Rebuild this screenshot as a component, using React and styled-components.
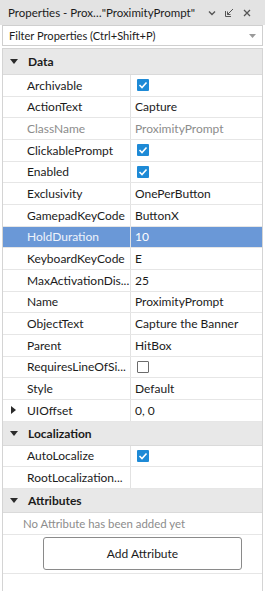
import React from 'react'
import styled, { createGlobalStyle } from 'styled-components'

const Global = createGlobalStyle`
  html, body {
    margin: 0;
    padding: 0;
    background: #ffffff;
  }
  body {
    font-family: Lato, "Open Sans", sans-serif;
    font-size: 12px;
    color: #1b1b1b;
  }
`

const Panel = styled.div`
  width: 265px;
  height: 591px;
  display: flex;
  flex-direction: column;
  background: #ffffff;
  overflow: hidden;
`

const TitleBar = styled.div`
  height: 25px;
  display: flex;
  align-items: center;
  padding: 0 14px 0 8px;
  background: #e3e3e3;
  font-size: 11.5px;
  color: #1b1b1b;
  white-space: nowrap;

  .title {
    flex: 1;
  }
  .icons {
    display: flex;
    align-items: center;
    gap: 9px;
  }
`

const Filter = styled.div`
  height: 19px;
  margin: 0 2px;
  display: flex;
  align-items: center;
  padding: 0 6px;
  border: 1px solid #cfcfcf;
  background: #fff;
  font-size: 11.1px;
  color: #1b1b1b;

  .text {
    flex: 1;
  }
`

const Tree = styled.div`
  flex: 1;
  margin: 2px 2px 0 2px;
  border: 1px solid #d4d4d4;
  border-bottom: none;
  display: flex;
  flex-direction: column;
`

const Section = styled.div`
  height: ${p => p.h || 24}px;
  display: flex;
  align-items: center;
  gap: 10px;
  padding-left: 7px;
  background: #e8e8e8;
  border-bottom: 1px solid #dadada;
  font-weight: 700;
  font-size: 12px;
  color: #1b1b1b;
  box-sizing: border-box;
`

const Row = styled.div`
  height: 21.67px;
  display: grid;
  grid-template-columns: 128px 1fr;
  border-bottom: 1px solid #e6e6e6;
  box-sizing: border-box;
  background: ${p => (p.selected ? '#6a98d7' : '#ffffff')};
  color: ${p => (p.selected ? '#eef3fb' : p.muted ? '#8c8c8c' : '#1b1b1b')};
`

const NameCell = styled.div`
  display: flex;
  align-items: center;
  padding-left: 8px;
  border-right: 1px solid #e2e2e2;
  white-space: nowrap;
  overflow: hidden;
`

const ArrowSlot = styled.span`
  width: 16px;
  flex: none;
  display: flex;
  align-items: center;
`

const ValueCell = styled.div`
  display: flex;
  align-items: center;
  padding-left: 4px;
  white-space: nowrap;
  color: ${p => (p.selected ? '#ffffff' : 'inherit')};
`

const Check = styled.span`
  width: 12px;
  height: 12px;
  margin-left: 2px;
  border-radius: 1px;
  box-sizing: border-box;
  display: inline-flex;
  align-items: center;
  justify-content: center;
  background: ${p => (p.on ? '#1e8ad6' : '#ffffff')};
  border: ${p => (p.on ? 'none' : '1px solid #6b6b6b')};
`

const Note = styled.div`
  height: 22px;
  display: flex;
  align-items: center;
  padding-left: 20px;
  border-bottom: 1px solid #e6e6e6;
  box-sizing: border-box;
  font-size: 11.4px;
  color: #8c8c8c;
`

const ButtonArea = styled.div`
  height: 39px;
  display: flex;
  align-items: flex-start;
  padding: 2px 0 0 40px;
  border-bottom: 1px solid #e6e6e6;
  box-sizing: border-box;
`

const AddButton = styled.button`
  width: 199px;
  height: 33px;
  background: #ffffff;
  border: 1px solid #8a8a8a;
  border-radius: 3px;
  font-family: inherit;
  font-size: 12px;
  color: #1b1b1b;
`

const Down = ({ color = '#2b2b2b' }) => (
  <svg width="8" height="5" viewBox="0 0 8 5">
    <path d="M0 0h8L4 5z" fill={color} />
  </svg>
)

const Right = () => (
  <svg width="5" height="8" viewBox="0 0 5 8">
    <path d="M0 0v8l5-4z" fill="#2b2b2b" />
  </svg>
)

const Tick = () => (
  <svg width="10" height="8" viewBox="0 0 10 8">
    <path d="M1.5 4l2.5 2.5 4.5-5" fill="none" stroke="#fff" strokeWidth="1.6" />
  </svg>
)

const data = [
  { name: 'Archivable', check: true },
  { name: 'ActionText', value: 'Capture' },
  { name: 'ClassName', value: 'ProximityPrompt', muted: true },
  { name: 'ClickablePrompt', check: true },
  { name: 'Enabled', check: true },
  { name: 'Exclusivity', value: 'OnePerButton' },
  { name: 'GamepadKeyCode', value: 'ButtonX' },
  { name: 'HoldDuration', value: '10', selected: true },
  { name: 'KeyboardKeyCode', value: 'E' },
  { name: 'MaxActivationDis...', value: '25' },
  { name: 'Name', value: 'ProximityPrompt' },
  { name: 'ObjectText', value: 'Capture the Banner' },
  { name: 'Parent', value: 'HitBox' },
  { name: 'RequiresLineOfSi...', check: false },
  { name: 'Style', value: 'Default' },
  { name: 'UIOffset', value: '0, 0', expandable: true },
]

const localization = [
  { name: 'AutoLocalize', check: true },
  { name: 'RootLocalization...', value: '' },
]

function PropRow({ item }) {
  return (
    <Row selected={item.selected} muted={item.muted}>
      <NameCell>
        <ArrowSlot>{item.expandable && <Right />}</ArrowSlot>
        {item.name}
      </NameCell>
      <ValueCell selected={item.selected}>
        {item.check !== undefined ? (
          <Check on={item.check}>{item.check && <Tick />}</Check>
        ) : (
          item.value
        )}
      </ValueCell>
    </Row>
  )
}

export default function App() {
  return (
    <>
      <Global />
      <Panel>
        <TitleBar>
          <span className="title">Properties - Prox…"ProximityPrompt"</span>
          <span className="icons">
            <svg width="8" height="6" viewBox="0 0 8 6">
              <path d="M1 1.5L4 4.5l3-3" fill="none" stroke="#555" strokeWidth="1.4" />
            </svg>
            <svg width="9" height="9" viewBox="0 0 9 9">
              <path d="M0.5 3v5.5H6" fill="none" stroke="#555" strokeWidth="1" />
              <path d="M2.5 6.5L8 1M2.5 6.5V3.5M2.5 6.5h3" fill="none" stroke="#555" strokeWidth="1" />
            </svg>
            <svg width="8" height="8" viewBox="0 0 8 8">
              <path d="M1 1l6 6M7 1L1 7" fill="none" stroke="#555" strokeWidth="1.3" />
            </svg>
          </span>
        </TitleBar>
        <Filter>
          <span className="text">Filter Properties (Ctrl+Shift+P)</span>
          <svg width="7" height="4" viewBox="0 0 7 4">
            <path d="M0 0h7L3.5 4z" fill="#9a9a9a" />
          </svg>
        </Filter>
        <Tree>
          <Section h={26}>
            <Down />
            Data
          </Section>
          {data.map(item => (
            <PropRow key={item.name} item={item} />
          ))}
          <Section>
            <Down />
            Localization
          </Section>
          {localization.map(item => (
            <PropRow key={item.name} item={item} />
          ))}
          <Section>
            <Down />
            Attributes
          </Section>
          <Note>No Attribute has been added yet</Note>
          <ButtonArea>
            <AddButton>Add Attribute</AddButton>
          </ButtonArea>
        </Tree>
      </Panel>
    </>
  )
}
